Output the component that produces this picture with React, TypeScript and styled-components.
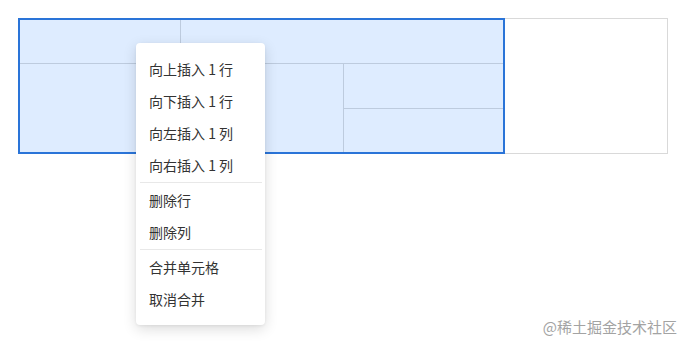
import { Fragment } from 'react'
import styled, { createGlobalStyle } from 'styled-components'

const GlobalStyle = createGlobalStyle`
  html, body {
    margin: 0;
    padding: 0;
    background: #fff;
  }
  * {
    box-sizing: border-box;
  }
`

const Page = styled.div`
  position: relative;
  width: 688px;
  height: 348px;
  padding: 18px 0 0 18px;
  font-family: 'Noto Sans CJK SC', 'Noto Sans', sans-serif;
  overflow: hidden;
`

const TableWrap = styled.div`
  position: relative;
  width: 650px;
`

const Grid = styled.div`
  display: grid;
  grid-template-columns: 161px 162px 160px 162px;
  grid-template-rows: 44px 44px 44px;
  gap: 1px;
  padding: 1px;
  background: #d9d9d9;
`

const Cell = styled.div<{ $col: string; $row: string }>`
  grid-column: ${(p) => p.$col};
  grid-row: ${(p) => p.$row};
  background: #fff;
`

// selected range drawn over the cells
const Selection = styled.div`
  position: absolute;
  left: 0;
  top: 0;
  width: 487px;
  height: 136px;
  border: 2px solid #2a74d8;
  background: rgba(22, 119, 255, 0.14);
  pointer-events: none;
`

const Menu = styled.ul`
  position: absolute;
  left: 136px;
  top: 43px;
  width: 129px;
  margin: 0;
  padding: 10px 0;
  list-style: none;
  background: #fff;
  border-radius: 4px;
  box-shadow: 0 4px 14px rgba(0, 0, 0, 0.14), 0 1px 3px rgba(0, 0, 0, 0.06);
`

const MenuItem = styled.li`
  height: 32px;
  line-height: 32px;
  padding: 0 13px;
  font-size: 14px;
  color: #333;
  white-space: nowrap;
  cursor: pointer;

  &:hover {
    background: #f5f5f5;
  }
`

const Divider = styled.li`
  height: 1px;
  margin: 1px 3px 1px 4px;
  background: #e8e8e8;
`

const Watermark = styled.div`
  position: absolute;
  right: 11px;
  top: 317px;
  font-size: 15px;
  line-height: 20px;
  color: #a3a3a3;
  text-shadow: 0 0 2px #fff;
`

const groups = [
  ['向上插入 1 行', '向下插入 1 行', '向左插入 1 列', '向右插入 1 列'],
  ['删除行', '删除列'],
  ['合并单元格', '取消合并'],
]

export default function App() {
  return (
    <>
      <GlobalStyle />
      <Page>
        <TableWrap>
          <Grid>
            <Cell $col="1" $row="1" />
            <Cell $col="2 / 4" $row="1" />
            <Cell $col="4" $row="1 / 4" />
            <Cell $col="1 / 3" $row="2 / 4" />
            <Cell $col="3" $row="2" />
            <Cell $col="3" $row="3" />
          </Grid>
          <Selection />
        </TableWrap>
        <Menu>
          {groups.map((g, i) => (
            <Fragment key={i}>
              {i > 0 && <Divider />}
              {g.map((label) => (
                <MenuItem key={label}>{label}</MenuItem>
              ))}
            </Fragment>
          ))}
        </Menu>
        <Watermark>@稀土掘金技术社区</Watermark>
      </Page>
    </>
  )
}
